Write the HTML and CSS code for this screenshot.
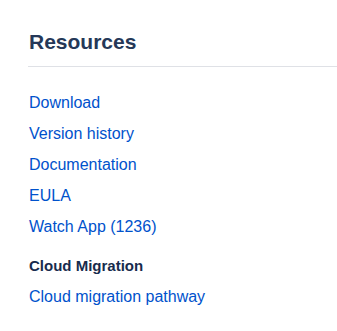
FILE: index.html
```html
<!DOCTYPE html>
<html lang="en">
<head>
	<meta charset="UTF-8">
	<title>Resources</title>
	<link rel="stylesheet" href="styles.css">
</head>
<body>
	<div class="resources">
		<h2 class="resources-title">Resources</h2>
		<ul class="link-list">
			<li><a href="#">Download</a></li>
			<li><a href="#">Version history</a></li>
			<li><a href="#">Documentation</a></li>
			<li><a href="#">EULA</a></li>
			<li><a href="#">Watch App (1236)</a></li>
		</ul>
		<h3 class="sub-title">Cloud Migration</h3>
		<ul class="link-list sub-list">
			<li><a href="#">Cloud migration pathway</a></li>
		</ul>
	</div>
</body>
</html>
```

FILE: styles.css
```css
*{
	margin: 0px;
	padding: 0px;
	list-style: none;
}
body{
	background: #fff;
	font-family: "Liberation Sans", Arial, sans-serif;
}
.resources{
	margin-left: 28px;
	padding-top: 28px;
}
.resources-title{
	font-size: 21px;
	line-height: 28px;
	font-weight: bold;
	color: #253858;
	padding-left: 1px;
	padding-bottom: 10px;
	border-bottom: 1px solid #dfe1e6;
}
.link-list{
	display: flex;
	flex-direction: column;
	gap: 11px;
	padding-top: 26px;
	padding-left: 1px;
}
.link-list li{
	font-size: 16px;
	line-height: 20px;
}
.link-list a{
	color: #0052cc;
	text-decoration: none;
}
.sub-title{
	font-size: 15px;
	line-height: 20px;
	font-weight: bold;
	color: #172b4d;
	padding-left: 1px;
	margin-top: 19px;
}
.sub-list{
	padding-top: 11px;
}
```
